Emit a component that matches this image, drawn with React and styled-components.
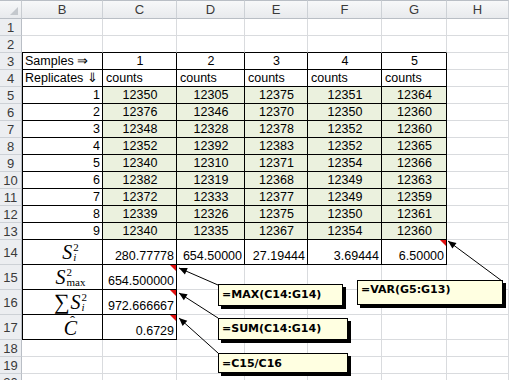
import React from 'react';
import styled, { createGlobalStyle, css } from 'styled-components';

const GRID = '#d9dbde';

const Global = createGlobalStyle`
  html, body { margin: 0; padding: 0; background: #fff; }
  body { font-family: "Liberation Sans", Arial, sans-serif; }
`;

const Page = styled.div`
  position: relative;
  width: 509px;
  height: 380px;
  overflow: hidden;
  background: #fff;
`;

const Sheet = styled.div`
  display: grid;
  grid-template-columns: 22px 81px 74px 68px 63px 74px 65px 62px;
  grid-template-rows: 19px repeat(13, 17px) repeat(4, 25px) repeat(3, 17px);
`;

const Corner = styled.div`
  position: relative;
  box-sizing: border-box;
  background: linear-gradient(#f7f8f9, #e8eaed);
  border-top: 1px solid #b9bec5;
  border-right: 1px solid #c8ccd1;
  border-bottom: 1px solid #b9bec5;
  &::after {
    content: '';
    position: absolute;
    right: 3px;
    bottom: 3px;
    border-left: 8px solid transparent;
    border-bottom: 8px solid #c4c8cd;
  }
`;

const ColHead = styled.div`
  box-sizing: border-box;
  background: linear-gradient(#f7f8f9, #e8eaed);
  border-top: 1px solid #b9bec5;
  border-right: 1px solid #cdd1d6;
  border-bottom: 1px solid #b9bec5;
  display: flex;
  align-items: center;
  justify-content: center;
  font-size: 13px;
  color: #3a3a3a;
`;

const RowHead = styled.div`
  box-sizing: border-box;
  background: #eceef1;
  border-right: 1px solid #b9bec5;
  border-bottom: 1px solid #cdd1d6;
  display: flex;
  align-items: center;
  justify-content: center;
  font-size: 13px;
  color: #3a3a3a;
`;

const Cell = styled.div`
  position: relative;
  box-sizing: border-box;
  border-right: 1px solid ${p => (p.$rb ? '#000' : GRID)};
  border-bottom: 1px solid ${p => (p.$bb ? '#000' : GRID)};
  ${p => p.$lb && css`box-shadow: inset 1px 0 0 #000;`}
  background: ${p => (p.$fill ? '#ebf1de' : '#fff')};
  display: flex;
  align-items: ${p => (p.$math ? 'center' : 'flex-end')};
  justify-content: ${p =>
    p.$align === 'right' ? 'flex-end' : p.$align === 'center' ? 'center' : 'flex-start'};
  padding: ${p => (p.$math ? '0 0 0 17px' : '0 2px 0 3px')};
  font-size: 12.5px;
  line-height: 15px;
  color: #000;
  white-space: nowrap;
  ${p =>
    p.$note &&
    css`
      &::after {
        content: '';
        position: absolute;
        top: 0;
        right: 0;
        border-left: 6px solid transparent;
        border-top: 6px solid #e01010;
      }
    `}
`;

const Formula = styled.span`
  display: inline-flex;
  align-items: center;
  font-family: "Liberation Serif", "Times New Roman", serif;
  color: #000;
`;

const Var = styled.span`
  display: block;
  font-style: italic;
  font-size: 20px;
  line-height: 20px;
`;

const Sigma = styled.span`
  font-size: 22px;
  line-height: 22px;
  margin-right: 1px;
`;

const Scripts = styled.span`
  display: inline-flex;
  flex-direction: column;
  align-items: flex-start;
  font-size: 11px;
  line-height: 10px;
  margin-left: 1px;
`;

const Script = styled.span`
  font-style: ${p => (p.$italic ? 'italic' : 'normal')};
`;

const Hatted = styled.span`
  display: inline-flex;
  flex-direction: column;
  align-items: center;
  margin-top: -2px;
`;

const Hat = styled.span`
  display: block;
  font-size: 15px;
  line-height: 15px;
  height: 4px;
  margin-left: 4px;
  overflow: visible;
`;

const Note = styled.div`
  position: absolute;
  left: ${p => p.$x}px;
  top: ${p => p.$y}px;
  width: ${p => p.$w}px;
  height: ${p => p.$h}px;
  box-sizing: border-box;
  background: #ffffe1;
  border: 1px solid #000;
  box-shadow: 3px 3px 0 #000;
  padding: ${p => p.$pt}px 3px 0;
  font-family: "DejaVu Sans", Tahoma, sans-serif;
  font-weight: bold;
  font-size: 11px;
  line-height: 13px;
  color: #000;
  white-space: nowrap;
`;

const Overlay = styled.svg`
  position: absolute;
  left: 0;
  top: 0;
  pointer-events: none;
`;

const COL_LETTERS = ['B', 'C', 'D', 'E', 'F', 'G', 'H'];

const DATA = [
  [12350, 12305, 12375, 12351, 12364],
  [12376, 12346, 12370, 12350, 12360],
  [12348, 12328, 12378, 12352, 12360],
  [12352, 12392, 12383, 12352, 12365],
  [12340, 12310, 12371, 12354, 12366],
  [12382, 12319, 12368, 12349, 12363],
  [12372, 12333, 12377, 12349, 12359],
  [12339, 12326, 12375, 12350, 12361],
  [12340, 12335, 12367, 12354, 12360],
];

const VARS = ['280.77778', '654.50000', '27.19444', '3.69444', '6.50000'];

const inTable = (r, c) =>
  (r >= 3 && r <= 14 && c >= 0 && c <= 5) || (r >= 15 && r <= 17 && c >= 0 && c <= 1);

const NOTES = { '14-5': true, '15-1': true, '16-1': true, '17-1': true };

function mathFor(r) {
  if (r === 14)
    return (
      <Formula>
        <Var>S</Var>
        <Scripts>
          <Script>2</Script>
          <Script $italic>i</Script>
        </Scripts>
      </Formula>
    );
  if (r === 15)
    return (
      <Formula>
        <Var>S</Var>
        <Scripts>
          <Script>2</Script>
          <Script>max</Script>
        </Scripts>
      </Formula>
    );
  if (r === 16)
    return (
      <Formula>
        <Sigma>∑</Sigma>
        <Var>S</Var>
        <Scripts>
          <Script>2</Script>
          <Script $italic>i</Script>
        </Scripts>
      </Formula>
    );
  if (r === 17)
    return (
      <Formula>
        <Hatted>
          <Hat>ˆ</Hat>
          <Var>C</Var>
        </Hatted>
      </Formula>
    );
  return null;
}

function content(r, c) {
  // c: 0 = B ... 6 = H
  if (r === 3) {
    if (c === 0) return { text: 'Samples ⇒', align: 'left' };
    if (c >= 1 && c <= 5) return { text: String(c), align: 'center' };
  }
  if (r === 4) {
    if (c === 0) return { text: 'Replicates ⇓', align: 'left' };
    if (c >= 1 && c <= 5) return { text: 'counts', align: 'left' };
  }
  if (r >= 5 && r <= 13) {
    if (c === 0) return { text: String(r - 4), align: 'right' };
    if (c >= 1 && c <= 5) return { text: String(DATA[r - 5][c - 1]), align: 'center', fill: true };
  }
  if (r >= 14 && r <= 17 && c === 0) return { math: mathFor(r), align: 'center' };
  if (r === 14 && c >= 1 && c <= 5) return { text: VARS[c - 1], align: 'right' };
  if (c === 1) {
    if (r === 15) return { text: '654.500000', align: 'right' };
    if (r === 16) return { text: '972.666667', align: 'right' };
    if (r === 17) return { text: '0.6729', align: 'right' };
  }
  return { text: '', align: 'left' };
}

const ARROWS = [
  { from: [218, 285], to: [179, 268] },
  { from: [218, 318], to: [179, 293] },
  { from: [218, 353], to: [179, 318] },
  { from: [502, 281], to: [448, 241] },
];

function head(from, to) {
  const dx = to[0] - from[0];
  const dy = to[1] - from[1];
  const len = Math.hypot(dx, dy);
  const ux = dx / len;
  const uy = dy / len;
  const L = 8;
  const W = 3.5;
  const bx = to[0] - ux * L;
  const by = to[1] - uy * L;
  return `${to[0]},${to[1]} ${bx - uy * W},${by + ux * W} ${bx + uy * W},${by - ux * W}`;
}

export default function App() {
  const rows = [];
  for (let r = 1; r <= 20; r++) {
    rows.push(<RowHead key={`h${r}`}>{r}</RowHead>);
    for (let c = 0; c < 7; c++) {
      const info = content(r, c);
      const rb = inTable(r, c) || inTable(r, c + 1);
      const bb = inTable(r, c) || inTable(r + 1, c);
      const lb = c === 0 && inTable(r, c);
      rows.push(
        <Cell
          key={`${r}-${c}`}
          $rb={rb}
          $bb={bb}
          $lb={lb}
          $fill={info.fill}
          $align={info.align}
          $math={!!info.math}
          $note={NOTES[`${r}-${c}`]}
        >
          {info.math || info.text}
        </Cell>
      );
    }
  }

  return (
    <Page>
      <Global />
      <Sheet>
        <Corner />
        {COL_LETTERS.map(l => (
          <ColHead key={l}>{l}</ColHead>
        ))}
        {rows}
      </Sheet>
      <Note $x={218} $y={284} $w={125} $h={22} $pt={3}>=MAX(C14:G14)</Note>
      <Note $x={218} $y={318} $w={130} $h={22} $pt={3}>=SUM(C14:G14)</Note>
      <Note $x={218} $y={353} $w={130} $h={20} $pt={3}>=C15/C16</Note>
      <Note $x={357} $y={280} $w={146} $h={25} $pt={2}>=VAR(G5:G13)</Note>
      <Overlay width="509" height="380" viewBox="0 0 509 380">
        {ARROWS.map((a, i) => (
          <g key={i}>
            <line
              x1={a.from[0]}
              y1={a.from[1]}
              x2={a.to[0]}
              y2={a.to[1]}
              stroke="#000"
              strokeWidth="1"
            />
            <polygon points={head(a.from, a.to)} fill="#000" />
          </g>
        ))}
      </Overlay>
    </Page>
  );
}
